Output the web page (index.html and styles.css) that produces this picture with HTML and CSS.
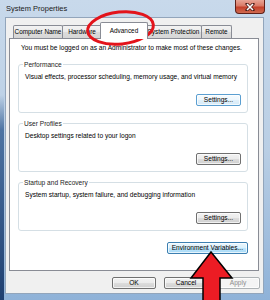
FILE: index.html
```html
<!DOCTYPE html>
<html lang="en">
  <head>
    <meta charset="UTF-8" />
    <meta name="viewport" content="width=device-width, initial-scale=1.0" />
    <title>System Properties</title>
    <link rel="stylesheet" href="styles.css">
  </head>
  <body>
    <div class="window">
      <div class="titlebar">
        <span class="title">System Properties</span>
        <div class="close">
          <svg width="10" height="8" viewBox="0 0 10 8">
            <path d="M2 1 L8 7 M8 1 L2 7" stroke="#4a1a14" stroke-width="3" stroke-linecap="square" />
            <path d="M2 1 L8 7 M8 1 L2 7" stroke="#ffffff" stroke-width="1.6" />
          </svg>
        </div>
      </div>
      <div class="client">
        <div class="tabs">
          <div class="tab tab-computer">Computer Name</div>
          <div class="tab tab-hardware">Hardware</div>
          <div class="tab tab-advanced active">Advanced</div>
          <div class="tab tab-protection">System Protection</div>
          <div class="tab tab-remote">Remote</div>
        </div>
        <div class="panel">
          <p class="note">You must be logged on as an Administrator to make most of these changes.</p>
          <fieldset class="group">
            <legend>Performance</legend>
            <p>Visual effects, processor scheduling, memory usage, and virtual memory</p>
            <div class="row"><button class="btn hot">Settings...</button></div>
          </fieldset>
          <fieldset class="group">
            <legend>User Profiles</legend>
            <p>Desktop settings related to your logon</p>
            <div class="row"><button class="btn">Settings...</button></div>
          </fieldset>
          <fieldset class="group">
            <legend>Startup and Recovery</legend>
            <p>System startup, system failure, and debugging information</p>
            <div class="row"><button class="btn">Settings...</button></div>
          </fieldset>
          <div class="row env"><button class="btn default">Environment Variables...</button></div>
        </div>
        <div class="actions">
          <button class="btn">OK</button>
          <button class="btn">Cancel</button>
          <button class="btn" disabled>Apply</button>
        </div>
      </div>

      <!-- annotation drawn over the dialog -->
      <svg class="marks" width="270" height="300" viewBox="0 0 270 300">
        <ellipse cx="120.5" cy="28" rx="33" ry="16" transform="rotate(-6 120.5 28)" fill="none" stroke="#e3141b" stroke-width="3" />
        <polygon points="211,252 232,278 220,278 220,302 203,302 203,278 191,278" fill="#ec1c24" stroke="#000" stroke-width="1.5" stroke-linejoin="miter" />
      </svg>
    </div>
  </body>
</html>
```

FILE: styles.css
```css
body {
  margin: 0;
  font-family: "Liberation Sans", Arial, sans-serif;
  font-size: 6.6px;
  color: #000;
}
.window {
  position: relative;
  width: 270px;
  height: 300px;
  display: flex;
  flex-direction: column;
  overflow: hidden;
  background:
    linear-gradient(to bottom, transparent 95px, #4e74a3 130px, #1f3f70 300px) left / 4px 100% no-repeat,
    linear-gradient(to bottom, #c8d9eb 0, #b9cee4 50%, #8fb2d8 100%);
}
.titlebar {
  height: 17px;
  display: flex;
  align-items: flex-start;
}
.title {
  font-family: "Liberation Sans", Arial, sans-serif;
  font-size: 7.5px;
  line-height: 18px;
  margin-left: 6px;
  color: #1a1a1a;
}
.close {
  margin-left: auto;
  margin-right: 5px;
  width: 30px;
  height: 14px;
  box-sizing: border-box;
  border: 1px solid #5e2019;
  border-top: none;
  border-radius: 0 0 4px 4px;
  background: linear-gradient(to bottom, #e8a596 0, #d97a66 45%, #c4402a 55%, #cf6a50 100%);
  display: flex;
  align-items: center;
  justify-content: center;
}
.client {
  flex: 1;
  margin: 0 6px 6px 5px;
  background: #f0f0f0;
  border: 1px solid #92a5bb;
  display: flex;
  flex-direction: column;
}
.tabs {
  display: flex;
  align-items: flex-end;
  height: 16px;
  margin: 4px 0 0 7px;
}
.tab {
  position: relative;
  height: 13px;
  box-sizing: border-box;
  border: 1px solid #898c95;
  border-bottom: none;
  border-radius: 2px 2px 0 0;
  background: linear-gradient(to bottom, #f3f3f3, #e9e9e9 50%, #dcdcdc 50%, #d6d6d6);
  font-size: 6.4px;
  line-height: 12px;
  text-align: center;
  white-space: nowrap;
  margin-left: -1px;
}
.tab-computer { width: 50px; margin-left: 0; }
.tab-hardware { width: 40px; }
.tab-advanced { width: 48px; }
.tab-protection { width: 57px; }
.tab-remote { width: 31px; }
.tab.active {
  height: 17px;
  margin: 0 -2px -1px -2px;
  background: #fff;
  z-index: 2;
  line-height: 16px;
}
.panel {
  flex: 1;
  margin: 0 4px 0 3px;
  background: #fff;
  border: 1px solid #898c95;
  padding-top: 4px;
}
.note {
  margin: 0 0 0 11px;
  line-height: 9px;
}
.group {
  margin: 7.5px 10px 0 8px;
  padding: 0 6px 6px 6px;
  border: 1px solid #d5dfe5;
  border-radius: 3px;
}
.group + .group {
  margin-top: 5.5px;
}
.group legend {
  padding: 0 1px;
  margin-left: -2px;
  line-height: 9px;
  color: #1c1c1c;
}
.group p {
  margin: 3.5px 0 0;
  line-height: 9px;
}
.row {
  display: flex;
  justify-content: flex-end;
  margin-top: 13px;
}
.row.env {
  margin: 11px 10px 0 0;
}
.btn {
  height: 12px;
  min-width: 45px;
  box-sizing: border-box;
  padding: 0 4px;
  border: 1px solid #707070;
  border-radius: 2px;
  background: linear-gradient(to bottom, #f2f2f2 0, #ebebeb 50%, #dddddd 50%, #cfcfcf 100%);
  box-shadow: inset 0 0 0 1px rgba(255, 255, 255, 0.7);
  font-family: "Liberation Sans", Arial, sans-serif;
  font-size: 6.6px;
  line-height: 10px;
  color: #000;
}
.btn.hot {
  border-color: #5b9fd1;
  background: linear-gradient(to bottom, #f6fbfe 0, #eef7fd 50%, #e1f0fa 50%, #d6eaf7 100%);
}
.btn.default {
  border-color: #3c7fb1;
  background: linear-gradient(to bottom, #eaf6fd 0, #d9f0fc 50%, #bee6fd 50%, #a7d9f5 100%);
}
.btn:disabled {
  border-color: #adb2b5;
  background: #f4f4f4;
  color: #8d8d8d;
}
.actions {
  display: flex;
  justify-content: flex-end;
  gap: 8px;
  padding: 6px 3px 4px 0;
}
.actions .btn {
  width: 44px;
  min-width: 0;
}
.marks {
  position: absolute;
  top: 0;
  left: 0;
  pointer-events: none;
}
```
